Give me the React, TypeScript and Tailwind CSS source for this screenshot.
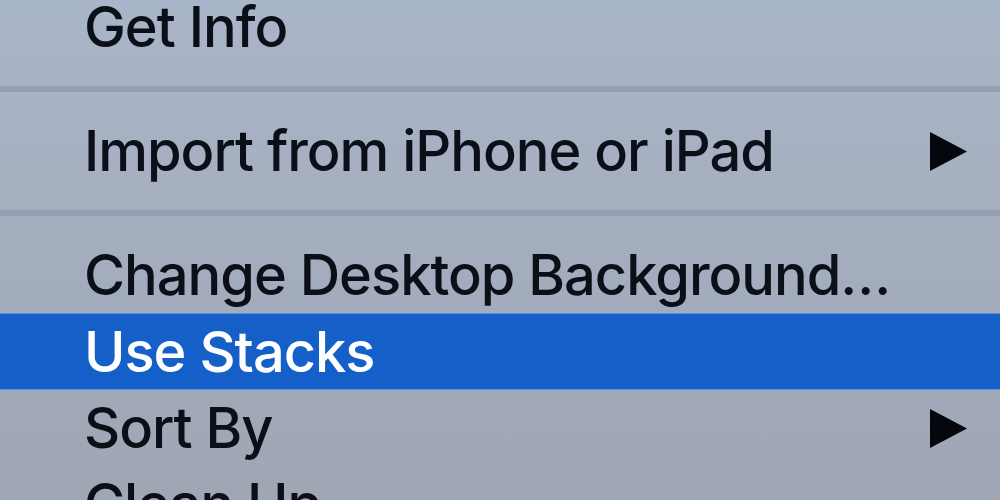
export default function App() {
  return (
    <main className="h-[500px] w-[1000px] overflow-hidden bg-gradient-to-b from-[#a9b5c8] to-[#9fa6b4] font-['Inter',sans-serif] text-[#0b0f18]">
      <div className="-mt-[11px] flex flex-col">
        <MenuItem label="Get Info" />
        <Separator />
        <MenuItem label="Import from iPhone or iPad" submenu />
        <Separator />
        <MenuItem label="Change Desktop Background…" />
        <MenuItem label="Use Stacks" active />
        <MenuItem label="Sort By" submenu />
        <MenuItem label="Clean Up" />
      </div>
    </main>
  );
}

function MenuItem({ label, submenu, active }: { label: string; submenu?: boolean; active?: boolean }) {
  return (
    <div
      className={
        active
          ? "flex h-[77px] items-center justify-between border-y border-[#5b8fe0] bg-[#1460c8] pl-[84px] pr-[33px] text-white"
          : "flex h-[76px] items-center justify-between pl-[84px] pr-[33px]"
      }
    >
      <span className="text-[56px] font-[450] leading-none tracking-[-0.018em]">{label}</span>
      {submenu && (
        <svg width="38" height="39" viewBox="0 0 38 39" className="shrink-0">
          <path d="M1 0 L38 19.5 L1 39 Z" fill="#05070c" />
        </svg>
      )}
    </div>
  );
}

function Separator() {
  return (
    <div className="flex h-[48px] items-center">
      <div className="h-[6px] w-full bg-[#949fb1]" />
    </div>
  );
}
